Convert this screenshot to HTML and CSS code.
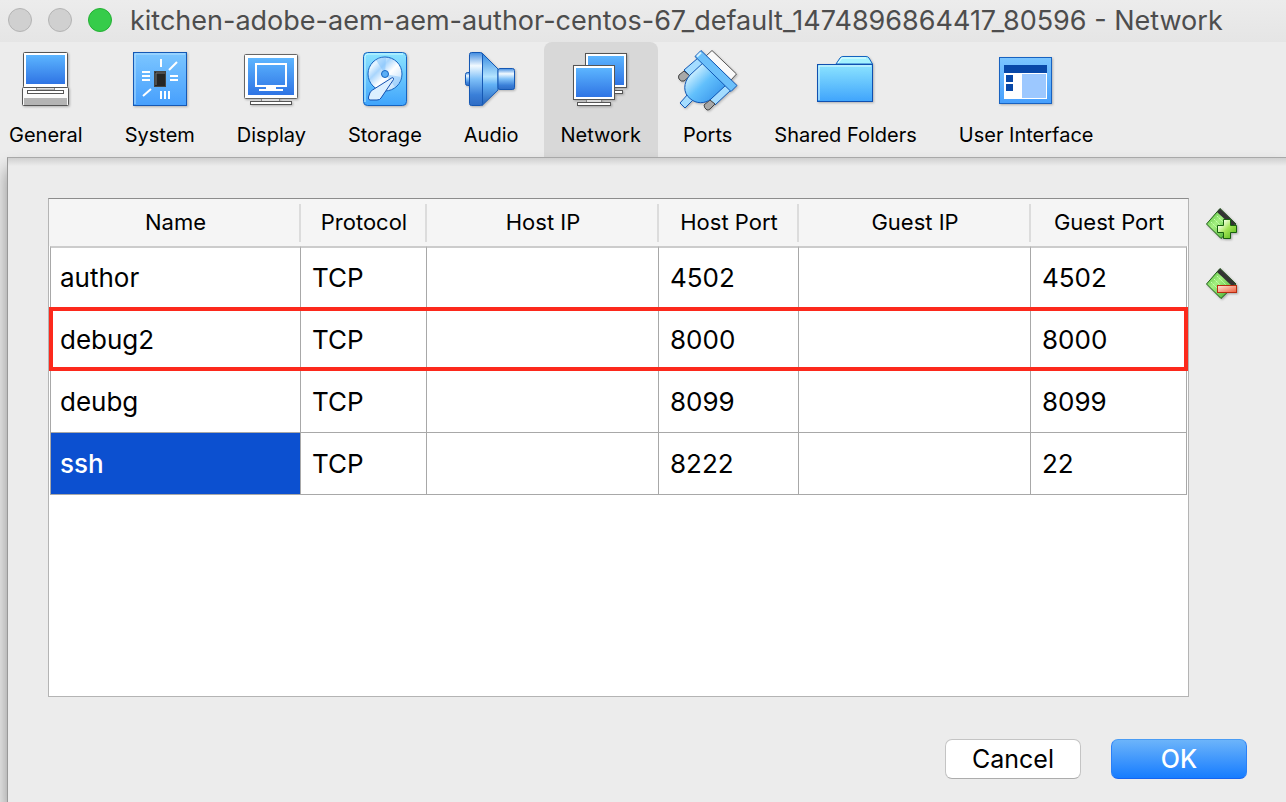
FILE: index.html
```html
<!DOCTYPE html>
<html lang="en">
<head>
    <meta charset="UTF-8">
    <meta name="viewport" content="width=device-width, initial-scale=1.0">
    <title>Port Forwarding Rules</title>
    <link rel="stylesheet" href="styles.css">
</head>

<body>

<!-- Gradients shared by the icons -->
<svg class="icon-defs" width="0" height="0" aria-hidden="true">
    <defs>
        <linearGradient id="screen" x1="0" y1="0" x2="0" y2="1">
            <stop offset="0" stop-color="#5cb5ff"/>
            <stop offset="1" stop-color="#2f74e4"/>
        </linearGradient>
        <linearGradient id="sky" x1="0" y1="0" x2="0" y2="1">
            <stop offset="0" stop-color="#7cc6ff"/>
            <stop offset="1" stop-color="#469ffd"/>
        </linearGradient>
        <linearGradient id="folder" x1="0" y1="0" x2="0" y2="1">
            <stop offset="0" stop-color="#8ce4ff"/>
            <stop offset="1" stop-color="#3fa4fc"/>
        </linearGradient>
        <linearGradient id="metal" x1="0" y1="0" x2="0" y2="1">
            <stop offset="0" stop-color="#3f8be0"/>
            <stop offset="0.25" stop-color="#f2faff"/>
            <stop offset="0.5" stop-color="#7fc0f8"/>
            <stop offset="0.8" stop-color="#3a7fd8"/>
            <stop offset="1" stop-color="#2f6cc4"/>
        </linearGradient>
        <linearGradient id="cone" x1="0" y1="0" x2="0" y2="1">
            <stop offset="0" stop-color="#2f86e0"/>
            <stop offset="0.45" stop-color="#b4e4ff"/>
            <stop offset="0.6" stop-color="#63b2f6"/>
            <stop offset="1" stop-color="#2460b8"/>
        </linearGradient>
        <linearGradient id="disc" x1="0" y1="0" x2="1" y2="1">
            <stop offset="0" stop-color="#8cc8fc"/>
            <stop offset="0.2" stop-color="#e8f5ff"/>
            <stop offset="0.35" stop-color="#a8d5fd"/>
            <stop offset="0.55" stop-color="#ffffff"/>
            <stop offset="1" stop-color="#a4d2fb"/>
        </linearGradient>
        <linearGradient id="plug" x1="0" y1="0" x2="1" y2="1">
            <stop offset="0.15" stop-color="#e4f9ff"/>
            <stop offset="0.5" stop-color="#62c0fc"/>
            <stop offset="1" stop-color="#2c88e6"/>
        </linearGradient>
        <linearGradient id="board" x1="0" y1="0" x2="1" y2="1">
            <stop offset="0" stop-color="#3faa2c"/>
            <stop offset="0.4" stop-color="#a4f080"/>
            <stop offset="1" stop-color="#2c9a1c"/>
        </linearGradient>
        <linearGradient id="plus" x1="0" y1="0" x2="1" y2="1">
            <stop offset="0.2" stop-color="#f4ffe0"/>
            <stop offset="0.5" stop-color="#a4e458"/>
            <stop offset="1" stop-color="#4cb410"/>
        </linearGradient>
        <linearGradient id="minus" x1="0" y1="0" x2="1" y2="1">
            <stop offset="0" stop-color="#ffe8dc"/>
            <stop offset="1" stop-color="#ee5a38"/>
        </linearGradient>
    </defs>
</svg>

<header class="title-bar">
    <span class="light"></span>
    <span class="light"></span>
    <span class="light zoom"></span>
    <h1>kitchen-adobe-aem-aem-author-centos-67_default_1474896864417_80596 - Network</h1>
</header>

<nav class="toolbar">
    <button class="tab" type="button">
        <svg class="icon" viewBox="0 0 64 64">
            <rect x="9.5" y="4.500" width="44" height="35" rx="1" fill="#fff" stroke="#555"/>
            <rect x="12" y="7" width="39" height="29" fill="url(#screen)"/>
            <rect x="8.500" y="39.500" width="46" height="18" rx="1" fill="#fafafa" stroke="#555"/>
            <rect x="10" y="50" width="43" height="7" fill="#b4b4b4"/>
            <path d="M22.500 40v2h18v-2" fill="#ddd" stroke="#888"/>
            <rect x="13.500" y="42.500" width="36" height="3" fill="#fff" stroke="#555"/>
        </svg>
        General
    </button>
    <button class="tab" type="button">
        <svg class="icon" viewBox="0 0 64 64">
            <rect x="5.500" y="4.500" width="53" height="53" fill="url(#sky)" stroke="#1558b4"/>
            <path d="M7 56V6h50" fill="none" stroke="#b4e0ff"/>
            <path d="M33 11v8M41 22l8-8M14 24h8M14 28h8M14 32h8M42 28h8M42 32h8M15 48l8-7M33 43v8M37 43v8M41 43v8" fill="none" stroke="#fff" stroke-width="2"/>
            <rect x="26.500" y="23.500" width="11" height="15" fill="#252525" stroke="#444"/>
            <path d="M28 37V25h9" fill="none" stroke="#777"/>
        </svg>
        System
    </button>
    <button class="tab" type="button">
        <svg class="icon" viewBox="0 0 64 64">
            <path d="M22.500 51v3h18v-3" fill="#ddd" stroke="#888"/>
            <rect x="5.500" y="6.500" width="53" height="44" rx="1" fill="#fff" stroke="#666"/>
            <rect x="9" y="10" width="46" height="37" fill="url(#screen)"/>
            <rect x="17" y="16" width="30" height="22" fill="none" stroke="#fff" stroke-width="2"/>
            <path d="M27 39h10v2h7v2H20v-2h7z" fill="#fff"/>
            <rect x="11.500" y="53.500" width="41" height="3" fill="#fff" stroke="#555"/>
        </svg>
        Display
    </button>
    <button class="tab" type="button">
        <svg class="icon" viewBox="0 0 64 64">
            <rect x="10.500" y="4.500" width="43" height="53" rx="4" fill="url(#folder)" stroke="#1463c0"/>
            <path d="M12 54V9q0-3 3-3h35" fill="none" stroke="#c8f8ff"/>
            <circle cx="32" cy="26" r="17" fill="url(#disc)" stroke="#1463c0"/>
            <path d="M32 26L23 12q5-3 10-2zM32 26l16 3q-1 6-6 10z" fill="#7fc2fc" opacity="0.5"/>
            <circle cx="32" cy="26" r="3.500" fill="#5aaef6" stroke="#1463c0"/>
            <path d="M37 31q4-3 3.500 0.500L28 50q-1 2-4 2h-7q-2 0-1.500-3l1-3q0-2 3-4z" fill="#dcefff" stroke="#1450b0"/>
        </svg>
        Storage
    </button>
    <button class="tab" type="button">
        <svg class="icon" viewBox="0 0 64 64">
            <rect x="6.500" y="24.500" width="6" height="13" rx="2" fill="url(#metal)" stroke="#1558b4"/>
            <path d="M23 5l16 16v21L23 57.500z" fill="url(#cone)" stroke="#1558b4"/>
            <rect x="39" y="20.500" width="16.500" height="21" rx="2" fill="url(#metal)" stroke="#1558b4"/>
            <rect x="10.500" y="4.500" width="13" height="53" rx="2" fill="url(#metal)" stroke="#1558b4"/>
        </svg>
        Audio
    </button>
    <button class="tab active" type="button">
        <svg class="icon" viewBox="0 0 64 64">
            <rect x="20.500" y="42.500" width="33" height="3" fill="#fff" stroke="#555"/>
            <rect x="16.500" y="5.500" width="41" height="34" fill="#fff" stroke="#555"/>
            <rect x="19" y="8" width="36" height="29" fill="url(#screen)"/>
            <path d="M17.500 52v3h15v-3" fill="#ddd" stroke="#888"/>
            <rect x="4.500" y="17.500" width="41" height="34" fill="#fff" stroke="#555"/>
            <rect x="7" y="20" width="36" height="29" fill="url(#screen)"/>
            <rect x="8.500" y="54.500" width="33" height="3" fill="#fff" stroke="#555"/>
        </svg>
        Network
    </button>
    <button class="tab" type="button">
        <svg class="icon" viewBox="0 0 64 64">
            <g stroke-linejoin="round">
                <path d="M36 2.500L60.500 26 55 32 30 8z" fill="#fafafa" stroke="#555"/>
                <path d="M22 10l6 6-14 12-6-6zM49 36l6 6-16 15-5-5zM12 46l6 5-9 9-5-5z" fill="#a4dcff" stroke="#1056b4"/>
                <path d="M8 23l-5 4q-1 2 0 4 2 3 5 2l6-5zM34 52l-6 5q0 3 3 5 2 0 3-1l5-5z" fill="#a8a8a8" stroke="#444"/>
                <path d="M28 14L14 27C7 35 7 45 14 50.500 20 56 29 56 35 51L50 37z" fill="url(#plug)" stroke="#1056b4"/>
                <path d="M25 2.500L61 37.500 55 43.500 19 8.500z" fill="#6cc0fa" stroke="#1056b4"/>
                <path d="M25 4.500L21 8.500" fill="none" stroke="#d4f2ff" stroke-width="2"/>
            </g>
        </svg>
        Ports
    </button>
    <button class="tab" type="button">
        <svg class="icon" viewBox="0 0 64 64">
            <path d="M22 16l4-6q1-1.500 3-1.500h23q2 0 3 1.500l3.500 6z" fill="#a4f2ff" stroke="#1463c0"/>
            <path d="M24 15l4-5h24" fill="none" stroke="#e8ffff"/>
            <rect x="3.500" y="16.500" width="55" height="37" fill="url(#folder)" stroke="#1050b0"/>
            <path d="M5 52V18h52" fill="none" stroke="#dcfaff"/>
        </svg>
        Shared Folders
    </button>
    <button class="tab" type="button">
        <svg class="icon" viewBox="0 0 64 64">
            <rect x="5.500" y="9.500" width="52" height="46" fill="url(#sky)" stroke="#1862c0"/>
            <rect x="10" y="17" width="43" height="34" fill="#fff"/>
            <path d="M10 17h43v8H10zM12 27h7v7h-7zM12 36h7v7h-7z" fill="#0848a8"/>
            <rect x="28" y="26" width="24" height="24" fill="#9cc8ff"/>
        </svg>
        User Interface
    </button>
</nav>

<main class="sheet">
    <div class="rules">
        <div class="table-view">
            <table>
                <colgroup>
                    <col class="col-name">
                    <col class="col-protocol">
                    <col>
                    <col class="col-host-port">
                    <col>
                    <col class="col-guest-port">
                </colgroup>
                <thead>
                    <tr>
                        <th scope="col">Name</th>
                        <th scope="col">Protocol</th>
                        <th scope="col">Host IP</th>
                        <th scope="col">Host Port</th>
                        <th scope="col">Guest IP</th>
                        <th scope="col">Guest Port</th>
                    </tr>
                </thead>
                <tbody>
                    <tr>
                        <td>author</td>
                        <td>TCP</td>
                        <td></td>
                        <td>4502</td>
                        <td></td>
                        <td>4502</td>
                    </tr>
                    <tr class="marked">
                        <td>debug2</td>
                        <td>TCP</td>
                        <td></td>
                        <td>8000</td>
                        <td></td>
                        <td>8000</td>
                    </tr>
                    <tr>
                        <td>deubg</td>
                        <td>TCP</td>
                        <td></td>
                        <td>8099</td>
                        <td></td>
                        <td>8099</td>
                    </tr>
                    <tr>
                        <td class="selected">ssh</td>
                        <td>TCP</td>
                        <td></td>
                        <td>8222</td>
                        <td></td>
                        <td>22</td>
                    </tr>
                </tbody>
            </table>
        </div>

        <div class="rule-buttons">
            <button type="button" aria-label="Add rule">
                <svg viewBox="0 0 32 32">
                    <path d="M14 .5L30 16 15 30.500.5 16z" fill="url(#board)" stroke="#1c5c14"/>
                    <path d="M14 .5L30 16l-4 2L11 4z" fill="#333"/>
                    <path d="M5 14l10 10M8 11l10 10M11 8l10 10" stroke="#c8ffb0" stroke-dasharray="2 1"/>
                    <path d="M17.500 11.500h7v6h6v7h-6v6h-7v-6h-6v-7h6z" fill="url(#plus)" stroke="#186010"/>
                </svg>
            </button>
            <button type="button" aria-label="Remove rule">
                <svg viewBox="0 0 32 32">
                    <path d="M14 .5L30 16 15 30.500.5 16z" fill="url(#board)" stroke="#1c5c14"/>
                    <path d="M14 .5L30 16l-4 2L11 4z" fill="#333"/>
                    <path d="M5 14l10 10M8 11l10 10M11 8l10 10" stroke="#c8ffb0" stroke-dasharray="2 1"/>
                    <rect x="11.500" y="17.500" width="19" height="7" fill="url(#minus)" stroke="#b82c10"/>
                </svg>
            </button>
        </div>
    </div>

    <footer class="actions">
        <button type="button">Cancel</button>
        <button class="primary" type="submit">OK</button>
    </footer>
</main>

</body>
</html>
```
FILE: styles.css
```css
/* Basic layout */
* {
    box-sizing: border-box;
}

body {
    margin: 0;
    min-height: 100vh;
    display: flex;
    flex-direction: column;
    background-color: #ececec;
    color: #000;
    font-family: Inter, "Liberation Sans", sans-serif;
}

button {
    padding: 0;
    border: none;
    background: none;
    color: inherit;
    font-family: inherit;
}

.icon-defs {
    position: absolute;
}

/* Window title */
.title-bar {
    height: 42px;
    display: flex;
    align-items: center;
    gap: 16px;
    padding: 0 8px 2px;
    background: linear-gradient(#ececec, #e5e5e5);
}

.title-bar h1 {
    margin: 0 0 0 2px;
    font-size: 27px;
    font-weight: 400;
    color: #4d4d4d;
    white-space: nowrap;
}

.light {
    flex: none;
    width: 24px;
    height: 24px;
    border: 1px solid #b4b4b4;
    border-radius: 50%;
    background-color: #d0d0d0;
}

.light.zoom {
    border-color: #24b034;
    background-color: #36cc4a;
}

/* Toolbar */
.toolbar {
    display: flex;
    gap: 8px;
    height: 115px;
}

.tab {
    display: flex;
    flex-direction: column;
    align-items: center;
    gap: 11px;
    padding: 6px 17px 0;
    border-radius: 8px 8px 0 0;
    font-size: 20px;
    line-height: 24px;
    white-space: nowrap;
}

.tab:first-child {
    padding-left: 9px;
}

.tab.active {
    background-color: #d8d8d8;
}

.icon {
    width: 64px;
    height: 64px;
    margin: 0 -8px;
    filter: drop-shadow(1px 1px 1px rgba(0, 0, 0, 0.25));
}

/* Sheet under the toolbar */
.sheet {
    flex: 1;
    display: flex;
    flex-direction: column;
    margin-left: 7px;
    padding: 40px 39px 23px 40px;
    border-top: 1px solid #a8a8a8;
    border-left: 1px solid #999;
    background: linear-gradient(#d0d0d0, #ececec 8px);
    box-shadow: 0 12px 16px rgba(0, 0, 0, 0.4);
}

.rules {
    flex: 1;
    display: flex;
    gap: 17px;
}

.table-view {
    flex: 1;
    border: 1px solid #b4b4b4;
    border-top-color: #8c8c8c;
    background-color: #fff;
}

table {
    width: calc(100% - 2px);
    margin: 0 1px;
    table-layout: fixed;
    border-spacing: 0;
}

.col-name {
    width: 251px;
}

.col-protocol {
    width: 126px;
}

.col-host-port {
    width: 140px;
}

.col-guest-port {
    width: 156px;
}

thead tr {
    height: 47px;
    background-color: #f5f5f5;
    box-shadow: -1px 0 #f5f5f5, 1px 0 #f5f5f5;
}

th {
    padding: 0 0 2px;
    background: linear-gradient(#dcdcdc, #dcdcdc) right center / 2px 38px no-repeat;
    font-size: 22px;
    font-weight: 400;
}

th:last-child {
    background: none;
}

td {
    height: 62px;
    padding: 0 11px;
    border-top: 1px solid #a8a8a8;
    border-right: 1px solid #a8a8a8;
    font-size: 26px;
}

td:first-child {
    padding-left: 9px;
    border-left: 1px solid #a8a8a8;
}

tbody tr:first-child td {
    padding-bottom: 2px;
    border-top: 2px solid #ccc;
}

tbody tr:last-child td {
    height: 63px;
    border-bottom: 1px solid #a8a8a8;
}

.marked {
    outline: 4px solid #fc291c;
    outline-offset: -3px;
}

td.selected {
    background-color: #0c50d0;
    color: #fff;
    font-weight: 500;
}

.rule-buttons {
    display: flex;
    flex-direction: column;
    gap: 28px;
    padding: 10px 9px 0 0;
}

.rule-buttons button {
    width: 32px;
    height: 32px;
}

.rule-buttons svg {
    display: block;
    filter: drop-shadow(1px 1px 1px rgba(0, 0, 0, 0.3));
}

/* Dialog buttons */
.actions {
    display: flex;
    justify-content: flex-end;
    gap: 30px;
    margin-top: 42px;
}

.actions button {
    width: 136px;
    height: 40px;
    border: 1px solid #c4c4c4;
    border-bottom-color: #acacac;
    border-radius: 7px;
    background-color: #fff;
    font-size: 25px;
}

.actions .primary {
    border-color: #4a9cf4 #2a80f8 #1664f0;
    background: linear-gradient(#6cb4fa, #167cff);
    color: #fff;
    font-weight: 500;
}
```
